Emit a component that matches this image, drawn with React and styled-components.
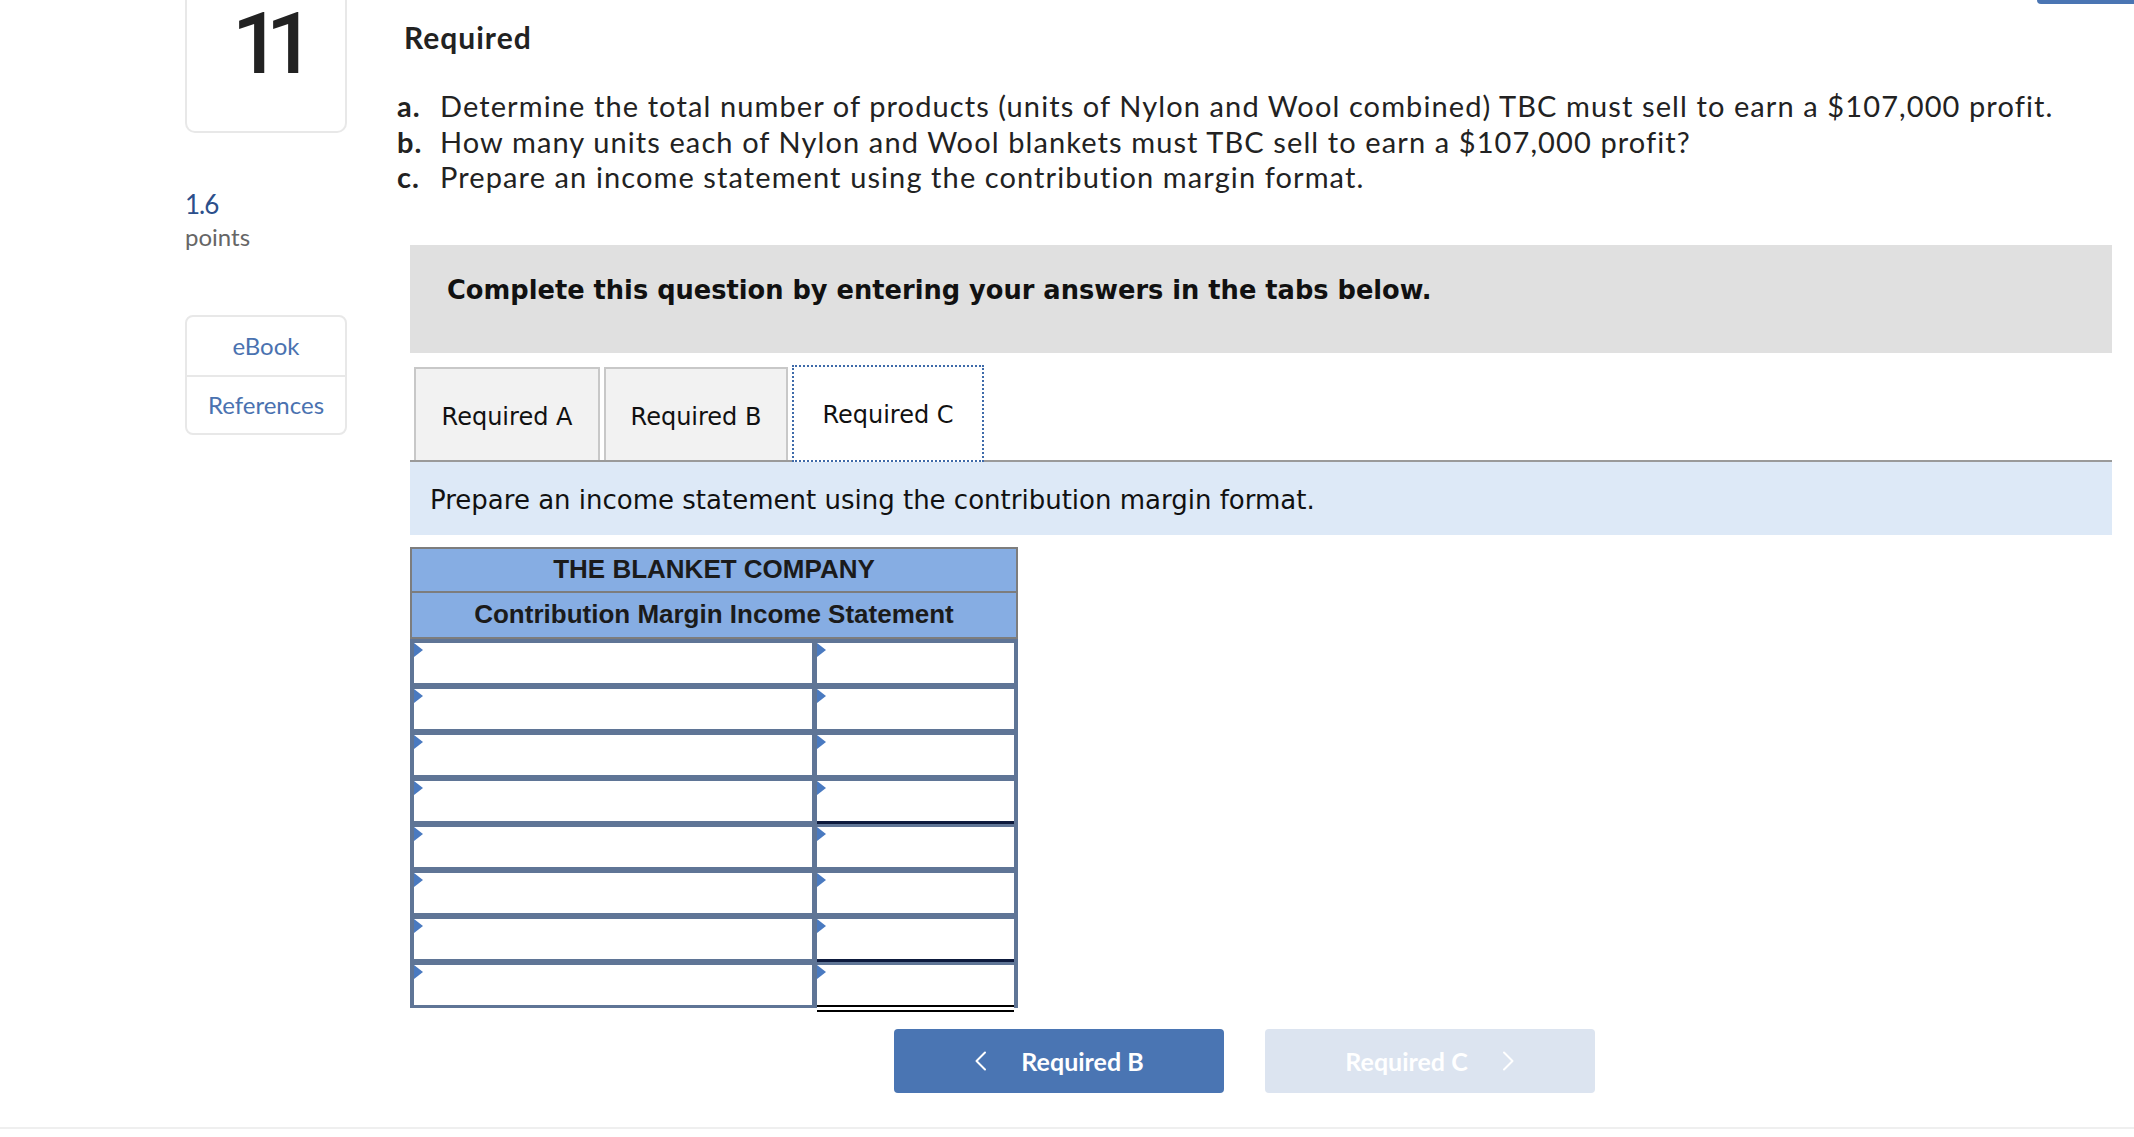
import React from "react";
import styled, { createGlobalStyle } from "styled-components";

const GlobalStyle = createGlobalStyle`
  body {
    margin: 0;
    background: #fff;
    font-family: Lato, "Liberation Sans", sans-serif;
    color: #222;
  }
`;

const Page = styled.div`
  position: relative;
  display: flex;
  width: 2134px;
  height: 1127px;
  border-bottom: 2px solid #efefef;
  overflow: hidden;
`;

const TopTab = styled.div`
  position: absolute;
  top: 0;
  right: 0;
  width: 97px;
  height: 4px;
  background: #4a75b3;
  border-bottom-left-radius: 6px;
`;

const Sidebar = styled.aside`
  width: 162px;
  margin-left: 185px;
  flex-shrink: 0;
`;

const NumberBox = styled.div`
  box-sizing: border-box;
  height: 133px;
  display: flex;
  justify-content: center;
  border: 2px solid #e8e8e8;
  border-top: none;
  border-radius: 0 0 10px 10px;
`;

const Number = styled.span`
  margin-top: 1px;
  font-family: Roboto, "Liberation Sans", sans-serif;
  font-size: 86px;
  font-weight: 500;
  line-height: 86px;
  letter-spacing: -15px;
  color: #222;
`;

const Points = styled.div`
  margin-top: 56px;
  font-size: 26px;
  line-height: 1.2;
  letter-spacing: -1px;
  color: #2c4f8b;
`;

const PointsLabel = styled.div`
  margin-top: 3px;
  font-size: 24px;
  line-height: 1.2;
  color: #666;
`;

const ResourceBox = styled.div`
  margin-top: 63px;
  border: 2px solid #e8e8e8;
  border-radius: 8px;
`;

const ResourceLink = styled.div`
  height: ${(p) => (p.first ? 58 : 56)}px;
  display: flex;
  align-items: center;
  justify-content: center;
  font-size: 24px;
  color: #4a72b0;
  border-top: ${(p) => (p.first ? "none" : "2px solid #e8e8e8")};
`;

const Main = styled.main`
  flex: 1;
  margin-left: 50px;
  margin-right: 22px;
`;

const Title = styled.h2`
  margin: 19px 0 0 7px;
  font-size: 30px;
  font-weight: 700;
  line-height: 1.2;
  letter-spacing: 1px;
`;

const List = styled.ol`
  margin: 33px 0 0;
  padding: 0;
  list-style: none;
  font-size: 29px;
  line-height: 35.5px;
  letter-spacing: 1.1px;
`;

const Item = styled.li`
  display: grid;
  grid-template-columns: 43px 1fr;
`;

const Letter = styled.span`
  font-weight: 700;
`;

const Question = styled.section`
  margin-left: 13px;
`;

const Prompt = styled.div`
  box-sizing: border-box;
  height: 108px;
  margin-top: 50px;
  padding: 30px 0 0 37px;
  background: #e0e0e0;
  font-family: "DejaVu Sans", Verdana, sans-serif;
  font-weight: 700;
  font-size: 25.7px;
  line-height: 1.2;
  color: #111;
`;

const Tabs = styled.div`
  display: flex;
  align-items: flex-end;
  gap: 4px;
  height: 93px;
  margin-top: 14px;
  padding-left: 4px;
  border-bottom: 2px solid #9a9a9a;
`;

const Tab = styled.div`
  box-sizing: border-box;
  width: ${(p) => p.w}px;
  height: ${(p) => (p.active ? 97 : 93)}px;
  margin-bottom: ${(p) => (p.active ? -2 : 0)}px;
  display: flex;
  align-items: center;
  justify-content: center;
  padding-top: ${(p) => (p.active ? 4 : 6)}px;
  background: ${(p) => (p.active ? "#fff" : "#f2f2f2")};
  border: ${(p) => (p.active ? "2px dotted #3e6aa9" : "2px solid #c8c8c8")};
  border-bottom: ${(p) => (p.active ? "2px dotted #3e6aa9" : "none")};
  font-family: "DejaVu Sans", Verdana, sans-serif;
  font-size: 24px;
  color: #111;
  position: relative;
  z-index: ${(p) => (p.active ? 1 : 0)};
`;

const Band = styled.div`
  box-sizing: border-box;
  height: 73px;
  display: flex;
  align-items: center;
  padding: 4px 0 0 20px;
  background: #dde9f7;
  font-family: "DejaVu Sans", Verdana, sans-serif;
  font-size: 26px;
  color: #111;
`;

const Statement = styled.div`
  width: 608px;
  margin-top: 12px;
  font-family: "Liberation Sans", Arial, sans-serif;
`;

const HeadRow = styled.div`
  box-sizing: border-box;
  height: 46px;
  display: flex;
  align-items: center;
  justify-content: center;
  background: #86ade3;
  border: 2px solid #7d7d7d;
  border-top: ${(p) => (p.first ? "2px solid #7d7d7d" : "none")};
  font-size: 26px;
  font-weight: 700;
  color: #1b1b1b;
`;

const Cells = styled.div`
  display: grid;
  grid-template-columns: 398px 197px;
  grid-auto-rows: 40px;
  column-gap: 5px;
  row-gap: 6px;
  padding: 4px 4px 3px;
  background: #5f7596;
`;

const Cell = styled.div`
  position: relative;
  background: #fff;
  box-shadow: ${(p) =>
    p.rule === "single"
      ? "0 3px 0 #0d1a3d"
      : p.rule === "double"
      ? "0 2px 0 #000, 0 5px 0 #fff, 0 7px 0 #000"
      : "none"};
`;

const Marker = styled.span`
  position: absolute;
  top: 0;
  left: 0;
  width: 0;
  height: 0;
  border-top: 7px solid transparent;
  border-bottom: 7px solid transparent;
  border-left: 9px solid #4a7ac0;
`;

const Nav = styled.div`
  display: flex;
  gap: 41px;
  margin-top: 21px;
  padding-left: 484px;
`;

const NavButton = styled.button`
  width: 330px;
  height: 64px;
  display: flex;
  align-items: center;
  justify-content: center;
  gap: 34px;
  border: none;
  border-radius: 4px;
  background: ${(p) => (p.disabled ? "#dce4f0" : "#4a75b3")};
  color: #fff;
  font-family: Lato, "Liberation Sans", sans-serif;
  font-size: 25px;
  font-weight: 700;
  padding: 0;
`;

const Chevron = ({ dir }) => (
  <svg width="13" height="20" viewBox="0 0 13 20" fill="none">
    <polyline
      points={dir === "left" ? "11,1.5 2.5,10 11,18.5" : "2,1.5 10.5,10 2,18.5"}
      stroke="#fff"
      strokeWidth="2"
      strokeLinecap="round"
      strokeLinejoin="round"
    />
  </svg>
);

const rules = [null, null, null, "single", null, null, "single", "double"];

export default function App() {
  return (
    <>
      <GlobalStyle />
      <Page>
        <TopTab />
        <Sidebar>
          <NumberBox>
            <Number>11</Number>
          </NumberBox>
          <Points>1.6</Points>
          <PointsLabel>points</PointsLabel>
          <ResourceBox>
            <ResourceLink first>eBook</ResourceLink>
            <ResourceLink>References</ResourceLink>
          </ResourceBox>
        </Sidebar>
        <Main>
          <Title>Required</Title>
          <List>
            <Item>
              <Letter>a.</Letter>
              <span>
                Determine the total number of products (units of Nylon and Wool combined) TBC must
                sell to earn a $107,000 profit.
              </span>
            </Item>
            <Item>
              <Letter>b.</Letter>
              <span>How many units each of Nylon and Wool blankets must TBC sell to earn a $107,000 profit?</span>
            </Item>
            <Item>
              <Letter>c.</Letter>
              <span>Prepare an income statement using the contribution margin format.</span>
            </Item>
          </List>
          <Question>
            <Prompt>Complete this question by entering your answers in the tabs below.</Prompt>
            <Tabs>
              <Tab w={186}>Required A</Tab>
              <Tab w={184}>Required B</Tab>
              <Tab w={192} active>
                Required C
              </Tab>
            </Tabs>
            <Band>Prepare an income statement using the contribution margin format.</Band>
            <Statement>
              <HeadRow first>THE BLANKET COMPANY</HeadRow>
              <HeadRow>Contribution Margin Income Statement</HeadRow>
              <Cells>
                {rules.map((rule, i) => (
                  <React.Fragment key={i}>
                    <Cell>
                      <Marker />
                    </Cell>
                    <Cell rule={rule}>
                      <Marker />
                    </Cell>
                  </React.Fragment>
                ))}
              </Cells>
            </Statement>
            <Nav>
              <NavButton>
                <Chevron dir="left" />
                Required B
              </NavButton>
              <NavButton disabled>
                Required C
                <Chevron dir="right" />
              </NavButton>
            </Nav>
          </Question>
        </Main>
      </Page>
    </>
  );
}
